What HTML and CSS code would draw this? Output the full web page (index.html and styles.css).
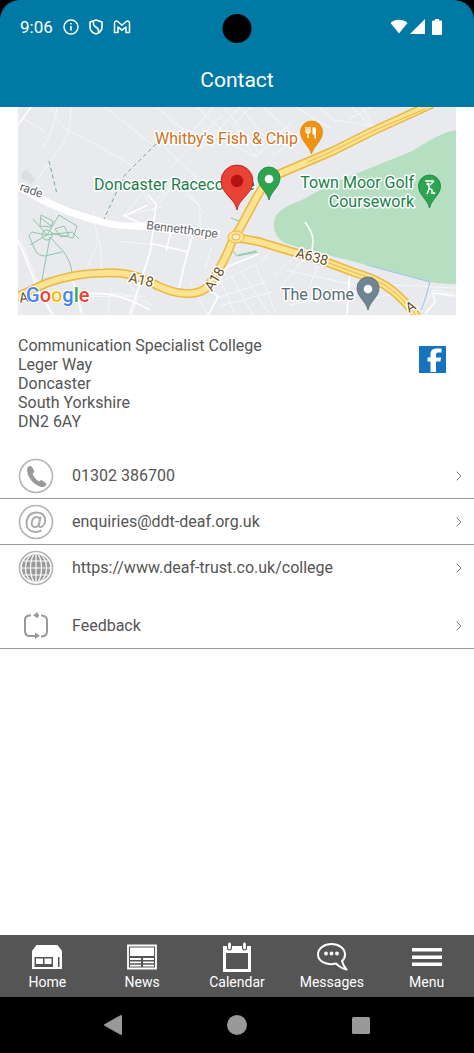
FILE: index.html
```html
<!DOCTYPE html>
<html lang="en">
<head>
<meta charset="utf-8">
<meta name="viewport" content="width=device-width, initial-scale=1">
<title>Contact</title>
<link rel="stylesheet" href="styles.css">
</head>
<body>
<div class="app">
  <header class="header">
    <div class="status">
      <div class="status-left">
        <span class="clock">9:06</span>
        <svg width="16" height="16" viewBox="0 0 16 16" fill="none" stroke="#fff" stroke-width="1.4"><circle cx="8" cy="8" r="7"/><path d="M8 7v4.6M8 4v1.6" stroke-width="1.6"/></svg>
        <svg width="14" height="16" viewBox="0 0 14 16" fill="none" stroke="#fff" stroke-width="1.6" stroke-linejoin="round"><path d="M7 1 13 3v5c0 3.500-2.500 5.800-6 7-3.500-1.200-6-3.500-6-7V3z"/><path d="M4.500 2.500C4 6 5 7 7.500 8.500c2 1.200 2.500 2.500 2 5"/></svg>
        <svg width="18" height="14" viewBox="0 0 18 14" fill="none" stroke="#fff" stroke-width="1.500" stroke-linejoin="round"><path d="M1.500 12.500V3c0-2 2-2.500 3.200-1.500L9 5.200l4.300-3.700c1.200-1 3.200-.5 3.200 1.500v9.500H13V7l-4 3.200L5 7v5.500z"/></svg>
      </div>
      <div class="status-right">
        <svg width="18" height="15" viewBox="0 0 18 15" fill="#fff"><path d="M9 14.500.5 4C5-.3 13-.3 17.500 4z"/></svg>
        <svg width="15" height="15" viewBox="0 0 15 15" fill="#fff"><path d="M15 0v15H0z"/></svg>
        <svg class="battery" width="10" height="16" viewBox="0 0 10 16" fill="#fff"><path d="M3 0h4v1.500h2a1 1 0 0 1 1 1V15a1 1 0 0 1-1 1H1a1 1 0 0 1-1-1V2.500a1 1 0 0 1 1-1h2z"/></svg>
      </div>
      <span class="camera"></span>
    </div>
    <h1 class="title">Contact</h1>
  </header>

  <main class="content">
    <svg class="map" viewBox="18 107 438 208" preserveAspectRatio="xMidYMid slice" role="img" aria-label="Map of Doncaster">
      <rect x="-200" y="0" width="900" height="500" fill="#e8eaed"/>
      <g fill="#dcdee1"><path d="m21 174 5-5 9 10-4 5-10-6z"/></g>
      <path fill="#b5dfc0" d="M456 130C438 133 422 146 410 152L333 183 300 201Q286 205 278 213 270 224 277 236 281 243 294 246L320 253 367 265 430 282Q445 284 456 284H700V100z"/>
      <g fill="none" stroke="#f6f7f9" stroke-width="1">
        <path d="M51 107q6 15 16 23 26 12 69 38M71 107q1 30-16 48L37 180M57 107q-2 22-15 42M18 115l27 17M105 107l48 38M161 207l-37 8 19-22 8 12 25-23M163 146l50 47M167 171l26-27 30-29M213 107l-23 28-20-14M240 107l-39 42M156 107l35 28M118 241l35 4M100 240l2 35M93 210l5 32-11 26M20 238l18 45 15 31M75 284l7 30M88 296q34-9 64 9M60 297l85-1M111 286l-3 28M129 280l8 20-5 15M190 283l18 32M204 293l15-10 36-18M222 283l13 32M231 276l22 39M241 270l28 44M216 298l50-16M220 306l52-14M256 265l20 48M211 248l-6 21M278 241l-17 22M274 276l24-22M370 300l20-6 4-9 60 3M285 270l70 15M290 305l74-15M425 305l8-15 22 4M300 263l-20 25M308 290l10-25"/>
        <path d="M197 107l38 35M201 129l55 28 36-36M256 157l-23-32 18-18M260 154l-35-46M271 144l-30-36M293 134l-29-26M317 129l-45 26M296 107l35 22M319 107l18 16M352 107l20 20M362 107l11 19-37-6M371 107l-22 12M180 183l25 30M152 211l22-26 26 21v25"/>
      </g>
      <g fill="none" stroke="#fff" stroke-width="1.600">
        <path d="M18 125l13-18M153 231l-3 22-6 18-14 43M150 243l38 9M193 233l-9 33-5 22M172 228l-6 23M18 240q8 18 20 50l14 24M73 281l9 33M85 294q30-4 65 16M148 205l-24 11 26 11 20-2M148 195l8 9-2 17M220 281q-3-7 9-15l30-12M211 290l7 7-10 18M425 314l10-12-2-9 22 3M350 270l-3 44M305 222q8 11 8 18l-1 12"/>
      </g>
      <path d="M18 186Q57 211 103 222 119 227 145 226L220 234" fill="none" stroke="#fff" stroke-width="7"/>
      <g fill="none" stroke="#8fc5a8" stroke-width="1">
        <path d="M46 235 32 232q-3 3-3 4l7 16q3 4 9 4l17-4M47 235 33 219M47 235l-17 10M47 235l12-20 18 11-4 12-22-5M47 235l26-3M50 237l-9 48M50 237l13 14q9 12 9 24M55 229l6 8 8-2-5-9zM41 215l12 6-2 6-11-1zM41 218l10 8M73 233l6 6"/>
        <circle cx="47" cy="235" r="5"/>
        <path d="M49 161l8 33M156 144l-32 32-20 43" stroke="#72a897" stroke-dasharray="4 3"/>
        <path d="M231 218l8 3M233 251l4 5 21-4M238 255l18-4"/>
      </g>
      <path d="M367 265l63 17-5 18-4 10" fill="none" stroke="#9fc3ef" stroke-width="1"/>
      <g fill="none" stroke-linecap="round" stroke-linejoin="round">
        <g stroke="#eab743" stroke-width="9">
          <path id="a18" d="M15 298C30 291 37 287 47 283 67 276 85 273 104 273 126 272 140 276 158 286 177 295 195 296 205 289 215 278 226 258 231 244L240 228 254 202Q269 174 279 174L333 151 373 131 430 105"/>
          <path id="a638" d="M237 238Q247 239 260 242L293 252 329 263 353 272Q380 280 393 291 403 299 416 315"/>
        </g>
        <g stroke="#fce38f" stroke-width="6"><use href="#a18"/><use href="#a638"/></g>
        <path stroke="#eab743" stroke-width="1" d="M308 162l25-11 40-20 52-22M329 263l24 9q27 8 40 19 10 8 22 23"/>
      </g>
      <ellipse cx="236" cy="237" rx="8" ry="6" fill="#fce38f" stroke="#eab743"/>
      <ellipse cx="236" cy="237" rx="4" ry="3" fill="#f1ecd9" stroke="#eab743"/>
      <g class="map-labels">
        <text class="road" transform="translate(19 190) rotate(20)">rade</text>
        <text class="road" transform="translate(146 229) rotate(7)">Bennetthorpe</text>
        <text class="route" transform="translate(128 282) rotate(12)">A18</text>
        <text class="route" transform="translate(212 292) rotate(-58)">A18</text>
        <text class="route" transform="translate(295 257) rotate(15)">A638</text>
        <text class="route" transform="translate(20 303) rotate(-10)">A</text>
        <text class="route" transform="translate(409 313) rotate(-30)">A</text>
        <text class="food" x="155" y="144">Whitby's Fish &amp; Chip</text>
        <text class="park" x="94" y="190">Doncaster Racecourse</text>
        <text class="park" x="414" y="188" text-anchor="end">Town Moor Golf</text>
        <text class="park" x="414" y="207" text-anchor="end">Coursework</text>
        <text class="place" x="281" y="300">The Dome</text>
      </g>
      <path fill="#ee9211" stroke="#d97f08" stroke-width=".7" d="M311.500 154c-2-8-11-13-11-22a11 11 0 0 1 22 0c0 9-9 14-11 22z"/>
      <path fill="none" stroke="#fff" stroke-width="1.300" d="M306 127v4q0 2 2 2t2-2v-4M308 127v11"/><path fill="#fff" d="M312.500 127.500q3.500-1 3.500 2v9h-1.500v-4h-2z"/>
      <path fill="#2ea44f" stroke="#188038" stroke-width=".8" d="M269 200c-2-9-11-13-11-22a11 11 0 0 1 22 0c0 9-9 13-11 22z"/><circle cx="269" cy="179" r="4.300" fill="#fff"/>
      <path fill="#2ea44f" stroke="#188038" stroke-width=".8" d="M429.500 208c-2-9-11-13-11-22a11 11 0 0 1 22 0c0 9-9 13-11 22z"/>
      <g fill="none" stroke="#fff" stroke-width="1.500"><path d="M425 181h9M429 185v4l-2 5M429 188l3 2v4M434 181l-4 4"/></g><circle cx="428" cy="184" r="1.600" fill="#fff"/><circle cx="434" cy="193" r="1.200" fill="#fff"/>
      <path fill="#708591" stroke="#596b76" stroke-width=".8" d="M368 310c-2-9-11-13-11-22a11 11 0 0 1 22 0c0 9-9 13-11 22z"/><circle cx="368" cy="289" r="4.300" fill="#fff"/>
      <path fill="#ea4335" stroke="#b31412" stroke-width=".8" d="M237 210c-2-12-16-16-16-29a16 16 0 0 1 32 0c0 13-14 17-16 29z"/><circle cx="237" cy="181" r="6.200" fill="#b31412"/>
      <text class="google" x="26" y="302"><tspan fill="#4285f4">G</tspan><tspan fill="#ea4335">o</tspan><tspan fill="#fbbc05">o</tspan><tspan fill="#4285f4">g</tspan><tspan fill="#34a853">l</tspan><tspan fill="#ea4335">e</tspan></text>
    </svg>

    <section class="intro">
      <address class="address">Communication Specialist College<br>Leger Way<br>Doncaster<br>South Yorkshire<br>DN2 6AY</address>
      <a class="facebook" href="#facebook" aria-label="Facebook"><svg width="27" height="27" viewBox="0 0 27 27"><path fill="#1773bd" d="M0 0h27v27H0z"/><path fill="#fff" d="M11.500 26V15.500H8.500v-4h3V8.500c0-4 2.300-6 6-6h5v4h-3.200c-1.700 0-2.300.8-2.300 2.300v2.700h5l-.6 4H17V26z"/></svg></a>
    </section>

    <nav class="links" aria-label="Contact options">
      <a class="row" href="tel:01302386700">
        <svg class="row-icon" viewBox="0 0 36 36"><circle cx="18" cy="18" r="16.500" fill="none" stroke="#b4b4b4" stroke-width="1.600"/><path fill="#999" d="M9.500 9.500C11 8 13 7.500 14 9l2 3.500c.7 1.200-.3 2.200-1.500 3.500 1.500 3.500 3.500 5.500 6.500 7.500 1.500-1 2.500-1.700 3.700-.8l3.300 2.600c1.300 1-.2 3.200-2.500 3.700C18 29.500 7 18.500 9.500 9.500z"/></svg>
        <span class="row-text">01302 386700</span>
        <svg class="chevron" viewBox="0 0 6 10"><path d="m.7.7 4.300 4.300L.7 9.300"/></svg>
      </a>
      <a class="row" href="mailto:enquiries@ddt-deaf.org.uk">
        <svg class="row-icon" viewBox="0 0 36 36"><circle cx="18" cy="18" r="16.500" fill="none" stroke="#b4b4b4" stroke-width="1.600"/><g fill="none" stroke="#aaa" stroke-width="1.900" stroke-linecap="round"><path d="M22.500 13.500 21 20.500c-.5 2.500 1 3.200 2.700 2.200C26.500 21 27.500 18 27 15c-.6-4-4-6.500-8.500-6.500C12.500 8.500 8.500 13 8.500 19c0 5.500 3.500 9 9 9 2.200 0 4-.5 5.500-1.300"/><path d="M22 15.500c-.6-1.800-1.800-2.500-3.300-2.500-3 0-5 3-5 6 0 2.500 1.300 4 3.300 4 2.200 0 3.700-1.500 4.300-4"/></g></svg>
        <span class="row-text">enquiries@ddt-deaf.org.uk</span>
        <svg class="chevron" viewBox="0 0 6 10"><path d="m.7.7 4.300 4.300L.7 9.300"/></svg>
      </a>
      <a class="row row-last" href="https://www.deaf-trust.co.uk/college">
        <svg class="row-icon" viewBox="0 0 36 36"><circle cx="18" cy="18" r="16.500" fill="none" stroke="#b4b4b4" stroke-width="1.600"/><circle cx="18" cy="18" r="14.200" fill="#999"/><g fill="none" stroke="#fff" stroke-width="1.200"><path d="M18 3v30M3 18h30M6 11h24M6 25h24"/><ellipse cx="18" cy="18" rx="5.500" ry="14.500"/><ellipse cx="18" cy="18" rx="10.500" ry="15"/></g></svg>
        <span class="row-text">https://www.deaf-trust.co.uk/college</span>
        <svg class="chevron" viewBox="0 0 6 10"><path d="m.7.7 4.300 4.300L.7 9.300"/></svg>
      </a>
      <a class="row row-feedback" href="#feedback">
        <svg class="row-icon" viewBox="0 0 36 36"><g fill="none" stroke="#999" stroke-width="2"><path d="M13 7.500h-1Q7 7.500 7 12v11q0 5 5 5h6M17 7h1M23 7.500q6 0 6 5v11q0 5-6 5M17 7.500h4"/></g><path fill="#999" d="M20 4v6.500L15 7.200zM17 24.500V31l5-3.200z"/></svg>
        <span class="row-text">Feedback</span>
        <svg class="chevron" viewBox="0 0 6 10"><path d="m.7.7 4.300 4.300L.7 9.300"/></svg>
      </a>
    </nav>
  </main>

  <nav class="tabs" aria-label="Main">
    <a class="tab" href="#home"><svg class="tab-icon" viewBox="0 0 32 32"><path fill="#fff" fill-rule="evenodd" d="M5.500 4h21L31 10v18H1V10zM3.500 16v10H22V16h5v10h1.500V16zM5 17.500h7V23H5zm8.500 0h7V23h-7z"/></svg>Home</a>
    <a class="tab" href="#news"><svg class="tab-icon" viewBox="0 0 32 32"><path fill="none" stroke="#fff" stroke-width="1.800" d="M2 4.500h28v23H2z"/><path fill="#fff" d="M4 6.500h24V15H4z"/><path stroke="#fff" stroke-width="1.800" d="M4 18h11M17 18h11M4 21.300h11M17 21.300h11M4 24.600h11M17 24.600h11"/></svg>News</a>
    <a class="tab" href="#calendar"><svg class="tab-icon" viewBox="0 0 32 32"><path fill="#fff" fill-rule="evenodd" d="M2 5h28v26H2zm3 7v16h22V12z"/><path stroke="#555" stroke-width="5" stroke-linecap="round" d="M8.500 3v4M23.500 3v4"/><path stroke="#fff" stroke-width="2.800" stroke-linecap="round" d="M8.500 3v4M23.500 3v4"/></svg>Calendar</a>
    <a class="tab" href="#messages"><svg class="tab-icon" viewBox="0 0 32 32"><path fill="none" stroke="#fff" stroke-width="2" stroke-linejoin="round" d="M20 22.500C9 25 2 19.500 2 13.500 2 7.500 8 3 15.500 3S29 7.500 29 13.500c0 2.500-1.200 5-3 6.500 1 3.500 2 6 4.500 8.500-4.500-1-7.500-3-10.500-6z"/><g fill="#fff"><circle cx="10" cy="12.500" r="1.900"/><circle cx="15.500" cy="12.500" r="1.900"/><circle cx="21" cy="12.500" r="1.900"/></g></svg>Messages</a>
    <a class="tab" href="#menu"><svg class="tab-icon" viewBox="0 0 32 32"><path fill="#fff" d="M1 7h30v3.500H1zM1 14.500h30V18H1zM1 21.500h30V25H1z"/></svg>Menu</a>
  </nav>

  <div class="system">
    <button class="sys" aria-label="Back"><svg width="20" height="20" viewBox="0 0 20 20"><path d="M18 1v18L2 10z" stroke="#999" stroke-width="2" stroke-linejoin="round"/></svg></button>
    <button class="sys" aria-label="Home screen"><svg width="20" height="20" viewBox="0 0 20 20"><circle cx="10" cy="10" r="10"/></svg></button>
    <button class="sys" aria-label="Recent apps"><svg width="20" height="20" viewBox="0 0 20 20"><rect x="1" y="2" width="18" height="17" rx="1.500"/></svg></button>
  </div>
</div>
</body>
</html>
```

FILE: styles.css
```css
* { box-sizing: border-box; }
body { margin: 0; background: #000; color: #555; font-family: Roboto, "Liberation Sans", sans-serif; }
svg { display: block; flex: none; }
a { color: inherit; text-decoration: none; }
.app { display: flex; flex-direction: column; min-height: 100vh; }

.header { background: #007aa5; color: #fff; border-radius: 20px 20px 0 0; }
.status { position: relative; display: flex; justify-content: space-between; align-items: center; height: 53px; padding: 0 32px 0 20px; }
.status-left { display: flex; align-items: center; gap: 10px; }
.clock { font-size: 17px; line-height: 20px; }
.status-right { display: flex; align-items: center; gap: 2px; }
.battery { margin-left: 5px; }
.camera { position: absolute; left: 50%; top: 14px; width: 29px; height: 29px; border-radius: 50%; background: #000; transform: translateX(-50%); }
.title { margin: 0; font-size: 21px; font-weight: 400; line-height: 54px; text-align: center; }

.content { flex: 1; background: #fff; }
.map { width: calc(100% - 36px); height: 208px; margin: 0 18px; }
.map-labels { font-size: 16px; stroke: #fff; stroke-width: 3px; stroke-linejoin: round; paint-order: stroke; }
.road { font-size: 12px; fill: #5f6368; }
.route { font-size: 14px; fill: #6b4d1d; }
.food { fill: #d2701b; }
.park { fill: #188048; }
.place { fill: #566b78; }
.google { font-size: 20px; font-weight: 500; stroke: #fff; stroke-width: 2px; paint-order: stroke; }

.intro { display: flex; justify-content: space-between; padding: 21px 28px 22px 18px; }
.address { font-size: 16px; font-style: normal; line-height: 19px; }
.facebook { margin-top: 10px; }

.row { display: flex; align-items: center; height: 46px; padding: 0 12px 0 18px; border-bottom: 1px solid #999; }
.row-last { border-bottom-color: transparent; }
.row-feedback { margin-top: 12px; }
.row-icon { width: 36px; height: 36px; }
.row-text { flex: 1; margin-left: 18px; font-size: 16px; line-height: 20px; }
.chevron { width: 6px; height: 10px; fill: none; stroke: #777; stroke-width: 1; }

.tabs { display: flex; height: 62px; background: #555; color: #fff; }
.tab { flex: 1; display: flex; flex-direction: column; align-items: center; padding-top: 6px; font-size: 14px; line-height: 18px; }
.tab-icon { width: 32px; height: 32px; }

.system { display: flex; justify-content: center; align-items: center; gap: 104px; height: 56px; }
.sys { padding: 0; border: 0; background: none; }
.sys svg { fill: #999; }
```
